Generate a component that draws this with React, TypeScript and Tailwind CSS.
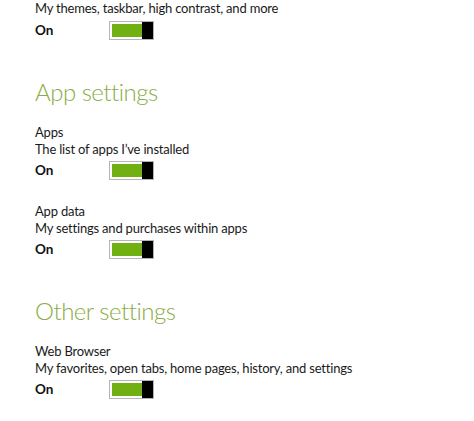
const sections = [
  {
    heading: "App settings",
    items: [
      { title: "Apps", desc: "The list of apps I’ve installed" },
      { title: "App data", desc: "My settings and purchases within apps" },
    ],
  },
  {
    heading: "Other settings",
    items: [
      {
        title: "Web Browser",
        desc: "My favorites, open tabs, home pages, history, and settings",
      },
    ],
  },
];

function Toggle() {
  return (
    <div className="flex h-[19px] w-[45px] border border-[#b5b5b5] bg-white">
      <div className="m-[2px] mr-0 flex-1 bg-[#70b012]" />
      <div className="w-[11px] bg-black" />
    </div>
  );
}

function OnRow() {
  return (
    <div className="flex h-[19px] items-center">
      <span className="w-[74px] text-[13.5px] font-bold text-[#111]">On</span>
      <Toggle />
    </div>
  );
}

export default function App() {
  return (
    <div
      className="h-[421px] w-[474px] overflow-hidden bg-white pl-[35px] text-[#1a1a1a]"
      style={{ fontFamily: 'Lato, "Open Sans", sans-serif' }}
    >
      <div className="text-[13px] leading-[17px] tracking-[-0.2px]">
        My themes, taskbar, high contrast, and more
      </div>
      <div className="mt-[4px]">
        <OnRow />
      </div>

      {sections.map((s) => (
        <div key={s.heading} className="mt-[37px]">
          <h2 className="text-[24px] font-light leading-[30px] tracking-[-0.5px] text-[#8aac45]">
            {s.heading}
          </h2>
          <div className="mt-[17px] flex flex-col gap-[23px]">
            {s.items.map((it) => (
              <div key={it.title} className="text-[13px] leading-[17px] tracking-[-0.2px]">
                <div>{it.title}</div>
                <div>{it.desc}</div>
                <div className="mt-[3px] tracking-normal">
                  <OnRow />
                </div>
              </div>
            ))}
          </div>
        </div>
      ))}
    </div>
  );
}
